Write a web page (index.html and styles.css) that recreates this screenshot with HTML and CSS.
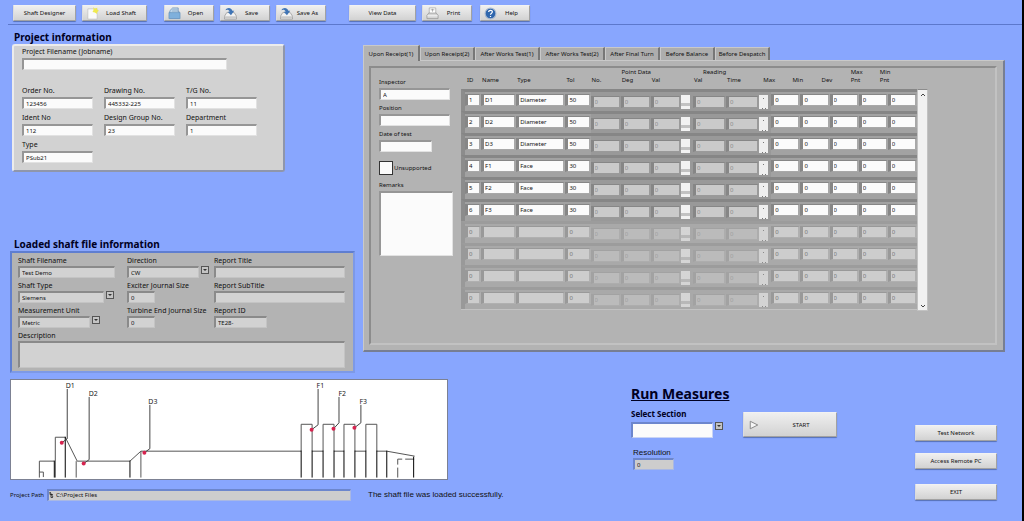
FILE: index.html
```html
<!DOCTYPE html>
<html lang="en">
<head>
  <meta charset="UTF-8" />
  <meta name="viewport" content="width=device-width, initial-scale=1.0" />
  <title>Shaft Measurement</title>
  <link rel="stylesheet" href="styles.css">
</head>
<body>
  <div class="toolbar">
    <button class="btn w-63">Shaft Designer</button>
    <button class="btn w-65 gap-after">
      <svg class="icon" viewBox="0 0 14 14"><path d="M2 2h10v11H2z" fill="#fafafa" stroke="#b5b5b5" stroke-width=".6"/><path d="M8 0l1.400 2L12 .8 12 3l2 1-2 1.500v2L9.500 6 7 5.500 8 3.500z" fill="#f0ea50"/></svg>
      <span>Load Shaft</span>
    </button>
    <button class="btn">
      <svg class="icon" viewBox="0 0 14 14"><path d="M2 12V4l3-3h6v4h1v7z" fill="#c5dcf0" stroke="#5681ad" stroke-width=".7"/><path d="M4.500 3h6M4 4.500h7" stroke="#7a98b5" stroke-width=".6"/><path d="M1 6h12v6.500H1z" fill="#7fb0dc" stroke="#5b8ab8" stroke-width=".6"/></svg>
      <span>Open</span>
    </button>
    <button class="btn">
      <svg class="icon" viewBox="0 0 14 14"><path d="M3 6h8l2.500 4v3H.5v-3z" fill="#f1f1f1" stroke="#8b8b8b" stroke-width=".7"/><path d="M1 10h12v2.500H1z" fill="#c9c9c9"/><path d="M1.500 3.500C3 .5 7.500-.2 9 4h2L7.500 9 4 5h2C5.200 2.800 3.500 2.500 1.500 3.500z" fill="#3f74b5"/></svg>
      <span>Save</span>
    </button>
    <button class="btn gap-after-lg">
      <svg class="icon" viewBox="0 0 14 14"><path d="M3 6h8l2.500 4v3H.5v-3z" fill="#f1f1f1" stroke="#8b8b8b" stroke-width=".7"/><path d="M1 10h12v2.500H1z" fill="#c9c9c9"/><path d="M1.500 3.500C3 .5 7.500-.2 9 4h2L7.500 9 4 5h2C5.200 2.800 3.500 2.500 1.500 3.500z" fill="#3f74b5"/></svg>
      <span>Save As</span>
    </button>
    <button class="btn w-67">View Data</button>
    <button class="btn gap-after-sm">
      <svg class="icon" viewBox="0 0 14 14"><path d="M3.500 7V1h7v6" fill="#fff" stroke="#9a9a9a" stroke-width=".7"/><path d="M5 3h4M7 2v3" stroke="#999" stroke-width=".8"/><path d="M1 9l2-2.500h8L13 9v3.500H1z" fill="#d5d5d5" stroke="#8d8d8d" stroke-width=".7"/><path d="M1.500 9.500h11" stroke="#f7f7f7"/></svg>
      <span>Print</span>
    </button>
    <button class="btn">
      <svg class="icon" viewBox="0 0 14 14"><circle cx="7" cy="7" r="5.800" fill="#2f66ad" stroke="#a9b9cf" stroke-width="1.200"/><path d="M5 5.500C5 3 9.200 3.100 9 5.400 8.900 6.700 7 6.600 7 8.300M7 9.600v1.300" fill="none" stroke="#fff" stroke-width="1.300"/></svg>
      <span>Help</span>
    </button>
  </div>

  <div class="upper">
    <div class="left-col">
      <h2>Project information</h2>
      <div class="panel project-panel">
        <div class="field job-field">
          <label for="jobname">Project Filename (Jobname)</label>
          <input id="jobname" type="text">
        </div>
        <div class="project-grid">
          <div class="field"><label for="orderNo">Order No.</label><input id="orderNo" type="text" value="123456"></div>
          <div class="field"><label for="drawingNo">Drawing No.</label><input id="drawingNo" type="text" value="445332-225"></div>
          <div class="field"><label for="tgNo">T/G No.</label><input id="tgNo" type="text" value="11"></div>
          <div class="field"><label for="identNo">Ident No</label><input id="identNo" type="text" value="112"></div>
          <div class="field"><label for="designNo">Design Group No.</label><input id="designNo" type="text" value="23"></div>
          <div class="field"><label for="department">Department</label><input id="department" type="text" value="1"></div>
          <div class="field"><label for="ptype">Type</label><input id="ptype" type="text" value="PSub21"></div>
        </div>
      </div>

      <h2>Loaded shaft file information</h2>
      <div class="shaft-panel">
        <div class="field"><label for="shaftFile">Shaft Filename</label><input id="shaftFile" type="text" value="Test Demo" readonly></div>
        <div class="field">
          <label for="direction">Direction</label>
          <div class="pick"><select id="direction" class="w-72"><option>CW</option><option>CCW</option></select><span class="arrow"></span></div>
        </div>
        <div class="field"><label for="repTitle">Report Title</label><input id="repTitle" type="text" readonly></div>
        <div class="field">
          <label for="shaftType">Shaft Type</label>
          <div class="pick"><select id="shaftType" class="w-86"><option>Siemens</option></select><span class="arrow"></span></div>
        </div>
        <div class="field"><label for="exciter">Exciter Journal Size</label><input id="exciter" class="w-28" type="text" value="0" readonly></div>
        <div class="field"><label for="repSub">Report SubTitle</label><input id="repSub" type="text" readonly></div>
        <div class="field">
          <label for="unit">Measurement Unit</label>
          <div class="pick"><select id="unit" class="w-72"><option>Metric</option></select><span class="arrow"></span></div>
        </div>
        <div class="field"><label for="turbine">Turbine End Journal Size</label><input id="turbine" class="w-28" type="text" value="0" readonly></div>
        <div class="field"><label for="repId">Report ID</label><input id="repId" class="w-53" type="text" value="TE28-" readonly></div>
        <div class="field wide"><label for="descr">Description</label><textarea id="descr" readonly></textarea></div>
      </div>
    </div>

    <div class="tabs-area">
      <div class="tabs" role="tablist">
        <button class="tab active" role="tab" aria-selected="true">Upon Receipt(1)</button>
        <button class="tab" role="tab">Upon Receipt(2)</button>
        <button class="tab wider" role="tab">After Works Test(1)</button>
        <button class="tab wider" role="tab">After Works Test(2)</button>
        <button class="tab" role="tab">After Final Turn</button>
        <button class="tab" role="tab">Before Balance</button>
        <button class="tab" role="tab">Before Despatch</button>
      </div>
      <div class="tab-panel">
        <div class="tab-body">
          <div class="inspect">
            <div class="field"><label for="inspector">Inspector</label><input id="inspector" type="text" value="A"></div>
            <div class="field"><label for="position">Position</label><input id="position" type="text"></div>
            <div class="field"><label for="testDate">Date of test</label><input id="testDate" class="w-53" type="text"></div>
            <div class="check"><input id="unsupported" type="checkbox"><label for="unsupported">Unsupported</label></div>
            <div class="field"><label for="remarks">Remarks</label><textarea id="remarks"></textarea></div>
          </div>

          <div class="readings">
            <table>
              <colgroup>
                <col class="c-id"><col class="c-name"><col class="c-type"><col class="c-tol">
                <col class="c-pt"><col class="c-pt"><col class="c-pt"><col class="c-slide">
                <col class="c-rd"><col class="c-rd"><col class="c-slide">
                <col class="c-st"><col class="c-st"><col class="c-st"><col class="c-st"><col class="c-st">
              </colgroup>
              <thead>
                <tr>
                  <th rowspan="2" class="first">ID</th>
                  <th rowspan="2">Name</th>
                  <th rowspan="2">Type</th>
                  <th rowspan="2">Tol</th>
                  <th colspan="3" class="mid">Point Data</th>
                  <th rowspan="2"></th>
                  <th colspan="2" class="reading">Reading</th>
                  <th rowspan="2"></th>
                  <th rowspan="2" class="stat"><span>Max</span></th>
                  <th rowspan="2" class="stat"><span>Min</span></th>
                  <th rowspan="2" class="stat"><span>Dev</span></th>
                  <th rowspan="2" class="stat"><span>Max<br>Pnt</span></th>
                  <th rowspan="2" class="stat"><span>Min<br>Pnt</span></th>
                </tr>
                <tr>
                  <th>No.</th><th>Deg</th><th>Val</th><th>Val</th><th>Time</th>
                </tr>
              </thead>
              <tbody id="rows"></tbody>
            </table>
            <div class="scroll">
              <button aria-label="Scroll up"><svg viewBox="0 0 6 4"><path d="M1 3l2-2 2 2" fill="none" stroke="#444"/></svg></button>
              <button aria-label="Scroll down"><svg viewBox="0 0 6 4"><path d="M1 1l2 2 2-2" fill="none" stroke="#444"/></svg></button>
            </div>
          </div>
        </div>
      </div>
    </div>
  </div>

  <div class="lower">
    <div class="drawing-col">
      <svg class="drawing" viewBox="0 0 438 99">
        <g fill="none" stroke="#555" stroke-width="1">
          <path d="M28.500 98V81.500H43.500"/>
          <path d="M28.500 92.500h4v5"/>
          <path d="M44.500 98V57.500H54.500L66.500 81.500H119.500L130.500 71.500H291.500V44.500H302.500V71.500H313.500V44.500H324.500V71.500H334.500V44.500H345.500V71.500H356.500V44.500H367.500V71.500H377.500L405.500 76.500"/>
          <path d="M65.500 81.500V98M130.500 71.500V98"/>
          <path d="M388.500 98V79.500H405" stroke-dasharray="10 3"/>
        </g>
        <path d="M43.500 81V98M54.500 57V98M119.500 81V98M291.500 71V98M302.500 71V98M313.500 71V98M324.500 71V98M334.500 71V98M345.500 71V98M356.500 71V98M367.500 71V98M377.500 71V98M404.500 77V98" stroke="#000" fill="none"/>
        <g fill="none" stroke="#444" stroke-width="1">
          <path d="M56.500 9V59L51 63"/>
          <path d="M78.500 17V80L73 84"/>
          <path d="M139.500 25V69L134 73"/>
          <path d="M308.500 9V45L302 50"/>
          <path d="M329.500 17V43L324 49"/>
          <path d="M351.500 25V43L345 48"/>
        </g>
        <g fill="#d6244f">
          <circle cx="51" cy="63" r="2"/><circle cx="73" cy="84" r="2"/><circle cx="134" cy="73" r="2"/>
          <circle cx="302" cy="50" r="2"/><circle cx="324" cy="49" r="2"/><circle cx="345" cy="48" r="2"/>
        </g>
        <g class="marks">
          <text x="55" y="8">D1</text><text x="78" y="16">D2</text><text x="138" y="24">D3</text>
          <text x="307" y="8">F1</text><text x="329" y="16">F2</text><text x="350" y="24">F3</text>
        </g>
      </svg>
      <div class="path-row">
        <label for="path">Project Path</label>
        <div class="path-box">
          <svg viewBox="0 0 5 8"><path d="M1 1v2.500h3M2 3.500v3h2M1 1l3 5" fill="none" stroke="#222" stroke-width=".8"/></svg>
          <input id="path" type="text" value="C:\Project Files" readonly>
        </div>
        <span class="status">The shaft file was loaded successfully.</span>
      </div>
    </div>

    <div class="run">
      <h1>Run Measures</h1>
      <div class="run-row">
        <div>
          <label class="section-label" for="section">Select Section</label>
          <div class="pick"><select id="section"><option></option></select><span class="arrow"></span></div>
          <div class="resolution">
            <label for="resolution">Resolution</label>
            <input id="resolution" type="text" value="0" readonly>
          </div>
        </div>
        <button class="btn start">
          <svg viewBox="0 0 8 8"><path d="M1 1l6 3-6 3z" fill="#f5f5f5" stroke="#8a8a8a" stroke-width=".8"/></svg>
          <span>START</span>
        </button>
      </div>
    </div>

    <div class="side-buttons">
      <button class="btn">Test Network</button>
      <button class="btn">Access Remote PC</button>
      <button class="btn exit">EXIT</button>
    </div>
  </div>

  <script src="script.js"></script>
</body>
</html>
```
FILE: styles.css
```css
* {
  box-sizing: border-box;
}

body {
  margin: 0;
  min-height: 100vh;
  background: #88a6fe;
  border-right: 2px solid #000;
  font-family: "Noto Sans", "Open Sans", sans-serif;
  font-size: 7px;
  line-height: 10px;
  color: #111;
}

h1, h2 {
  margin: 0;
  color: #000022;
}

h2 {
  font-size: 10px;
  line-height: 14px;
  padding-left: 4px;
}

button, input, select, textarea {
  font-family: inherit;
  font-size: 6px;
  line-height: 8px;
  color: #111;
  margin: 0;
}

label {
  display: block;
  white-space: nowrap;
}

/* raised buttons */
.btn {
  display: flex;
  align-items: center;
  justify-content: center;
  width: 50px;
  height: 16px;
  padding: 0 3px;
  border: 1px solid #a2a2a2;
  border-top-color: #f2f2f2;
  border-left-color: #dcdcdc;
  border-radius: 1px;
  background: linear-gradient(#efefef, #d2d2d2);
  box-shadow: 0 1px 1px #5670b5;
  white-space: nowrap;
}

.btn span {
  flex: 1;
  text-align: center;
}

.icon {
  width: 13px;
  height: 13px;
}

.w-63 { width: 63px; }
.w-65 { width: 65px; }
.w-67 { width: 67px; }

.toolbar {
  display: flex;
  gap: 6px;
  height: 25px;
  margin-left: 8px;
  padding: 5px 0 0 5px;
  border-bottom: 1px solid #5c78cc;
}

.gap-after { margin-right: 11px; }
.gap-after-lg { margin-right: 17px; }
.gap-after-sm { margin-right: 2px; }

/* sunken boxes */
input, select, textarea {
  display: block;
  width: 100%;
  height: 12px;
  padding: 0 2px;
  border: 2px solid;
  border-color: #969696 #e2e2e2 #e2e2e2 #969696;
  border-width: 2px 1px 1px 2px;
  border-radius: 0;
  background: #fbfbfb;
  appearance: none;
  outline: none;
}

textarea {
  resize: none;
}

.field label {
  margin-bottom: 1px;
}

.pick {
  display: flex;
  gap: 2px;
}

.arrow {
  display: flex;
  flex: none;
  align-items: center;
  justify-content: center;
  width: 8px;
  height: 8px;
  border: 1px solid #555;
  background: #c4c4c4;
}

.arrow::after {
  content: "";
  border: 2px solid transparent;
  border-top-color: #333;
  border-bottom: 0;
}

.upper {
  display: flex;
  align-items: flex-start;
  padding: 5px 17px 0 10px;
}

.left-col {
  width: 345px;
  flex: none;
}

.project-panel {
  width: 273px;
  height: 128px;
  margin: 0 0 65px 2px;
  padding: 1px 8px 0;
  background: #d2d2d2;
  border: 2px solid;
  border-color: #ececec #8f96ab #8f96ab #ececec;
  border-radius: 3px;
}

.job-field {
  width: 205px;
  margin-bottom: 16px;
}

.project-grid {
  display: grid;
  grid-template-columns: repeat(3, 71px);
  gap: 4px 11px;
}

.shaft-panel {
  display: grid;
  grid-template-columns: 97px 75px 131px;
  gap: 3px 12px;
  padding: 3px 6px 3px 6px;
  background: #b3b3b3;
  border: 2px solid;
  border-color: #5f7ed0 #7d99e6 #7d99e6 #5f7ed0;
}

.shaft-panel label {
  margin: 0;
}

.shaft-panel input, .shaft-panel select, .shaft-panel textarea {
  background: #d2d2d2;
  border-color: #8a8a8a #c4c4c4 #c4c4c4 #8a8a8a;
}

.shaft-panel select { flex: none; }

.wide {
  grid-column: 1 / -1;
}

.wide textarea {
  height: 27px;
}

.w-28 { width: 28px; }
.w-53 { width: 53px; }
.w-72 { width: 72px; }
.w-86 { width: 86px; }

/* tab control */
.tabs-area {
  flex: 1;
  margin: 15px 0 0 8px;
}

.tabs {
  display: flex;
  align-items: flex-end;
}

.tab {
  height: 13px;
  width: 55px;
  padding: 0;
  border: 1px solid #c9c9c9;
  border-right: 2px solid #777;
  border-bottom: 0;
  background: #adadad;
  white-space: nowrap;
}

.tab.wider { width: 65px; }

.tab.active {
  width: 57px;
  height: 16px;
  margin-bottom: -1px;
  background: #b3b3b3;
  z-index: 1;
}

.tab-panel {
  padding: 5px 6px 5px 5px;
  background: #b3b3b3;
  border: 1px solid #c9c9c9;
  border-right: 2px solid #777e92;
  border-bottom: 2px solid #777e92;
}

.tab-body {
  display: flex;
  align-items: flex-start;
  min-height: 279px;
  border: 2px solid;
  border-color: #8c8c8c #c2c2c2 #c2c2c2 #8c8c8c;
}

.inspect {
  width: 90px;
  padding: 10px 8px 0;
  font-size: 6px;
}

.inspect .field {
  width: 71px;
  margin-bottom: 4px;
}

.inspect .field label,
.check label {
  line-height: 9px;
}

.check {
  display: flex;
  align-items: center;
  gap: 1px;
  margin: 9px 0 6px;
}

.check input {
  width: 14px;
  height: 14px;
  padding: 0;
  border: 1px solid #333;
}

.inspect textarea {
  width: 74px;
  height: 65px;
}

/* readings table */
.readings {
  display: flex;
  align-items: flex-start;
}

table {
  table-layout: fixed;
  width: 456px;
  border-collapse: separate;
  border-spacing: 0;
  border-bottom: 1px solid #c2c2c2;
}

.c-id { width: 20px; }
.c-name { width: 35px; }
.c-type { width: 49px; }
.c-tol { width: 25px; }
.c-pt { width: 30px; }
.c-slide { width: 12px; }
.c-rd { width: 33px; }
.c-st { width: 29px; }

th {
  padding: 0 0 0 1px;
  height: 8px;
  font-size: 6px;
  line-height: 8px;
  font-weight: normal;
  text-align: left;
  vertical-align: bottom;
  white-space: nowrap;
}

th.first { padding-left: 6px; }
th.mid { text-align: center; }
th.reading { padding-left: 10px; }

.stat span {
  display: inline-block;
  margin-left: -9px;
}

thead::after {
  content: "";
  display: table-row;
  height: 5px;
}

td {
  height: 22px;
  padding: 0 0 4px;
  vertical-align: middle;
  background: #a2a2a2;
  border-top: 3px solid #868686;
}

td:first-child {
  border-left: 4px solid #8c8c8c;
}

td input {
  height: 12px;
  padding: 0 1px;
  border-color: #868686 #a8a8a8 #a8a8a8 #868686;
  border-width: 1px 2px 1px 3px;
}

td.grey {
  padding: 1px 0 0;
  background: #999;
}

td.grey input {
  background: #cacaca;
  color: #8c8c8c;
  border-color: #868686 #9a9a9a #9a9a9a #868686;
}

.knob {
  width: 9px;
  height: 14px;
  background: linear-gradient(#f2f2f2 55%, #c2c2c2 55%, #c2c2c2 80%, #f2f2f2 80%);
}

/* one dot on top, two at the bottom */
.knob.dots {
  background:
    linear-gradient(#777, #777) 4px 3px / 1px 1px no-repeat,
    linear-gradient(#777, #777) 3px 13px / 1px 1px no-repeat,
    linear-gradient(#777, #777) 6px 13px / 1px 1px no-repeat,
    #efefef;
}

tr.off td {
  background: #a9a9a9;
  border-top-color: #9c9c9c;
}

tr.off td:first-child { border-left-color: #999; }

tr.off input {
  background: #cdcdcd;
  color: #777;
  border-color: #999 #b0b0b0 #b0b0b0 #999;
}

tr.off td.grey input {
  background: #bbb;
  color: #a0a0a0;
  border-color: #a2a2a2 #adadad #adadad #a2a2a2;
}

tr.off .knob { opacity: .6; }

.scroll {
  display: flex;
  flex-direction: column;
  justify-content: space-between;
  width: 11px;
  height: 222px;
  margin-top: 21px;
  background: #f1f1f1;
  border: 1px solid #c2c2c2;
  border-top-color: #8c8c8c;
}

.scroll button {
  height: 9px;
  padding: 0;
  border: 0;
  background: none;
}

.scroll svg {
  display: block;
  width: 6px;
  height: 4px;
  margin: 0 auto;
}

/* bottom part */
.lower {
  display: flex;
  align-items: flex-start;
  padding: 6px 25px 0 10px;
}

.drawing-col {
  width: 621px;
  flex: none;
}

.drawing {
  display: block;
  width: 438px;
  background: #fff;
  border: 1px solid #7c8193;
}

.marks {
  font-size: 7px;
  fill: #222;
}

.path-row {
  display: flex;
  align-items: center;
  margin-top: 9px;
  font-size: 6px;
}

.path-box {
  display: flex;
  align-items: center;
  width: 304px;
  height: 12px;
  margin: 0 17px 0 3px;
  background: #cdcdcd;
  border: 2px solid;
  border-width: 2px 1px 1px 2px;
  border-color: #6c86cd #a9b8e4 #a9b8e4 #6c86cd;
}

.path-box svg {
  width: 5px;
  height: 8px;
}

.path-box input {
  height: 9px;
  border: 0;
  background: none;
}

.status {
  font-family: "Liberation Sans", Arial, sans-serif;
  font-size: 8px;
}

.run {
  flex: 1;
  padding-top: 5px;
}

h1 {
  font-size: 14px;
  line-height: 20px;
  text-decoration: underline;
}

.run-row {
  display: flex;
  gap: 20px;
}

.section-label {
  margin: 5px 0 3px;
  font-size: 8px;
  font-weight: bold;
  color: #000022;
}

.run select {
  width: 82px;
  height: 16px;
  border-color: #6c86cd #c9d4f5 #c9d4f5 #6c86cd;
}

.resolution {
  width: 41px;
  margin: 10px 0 0 2px;
}

.resolution label {
  font-family: "Liberation Sans", Arial, sans-serif;
  font-size: 8px;
}

.resolution input {
  background: #cdcdcd;
  border-color: #6c86cd #a9b8e4 #a9b8e4 #6c86cd;
}

.start {
  width: 94px;
  height: 25px;
  margin-top: 8px;
}

.start svg {
  width: 10px;
  height: 10px;
  margin-left: 2px;
}

.start span {
  padding-left: 10px;
}

.side-buttons {
  display: flex;
  flex-direction: column;
  gap: 12px;
  padding-top: 46px;
}

.side-buttons .btn {
  width: 82px;
}

.exit { margin-top: 3px; }
```
FILE: script.js
```javascript
const points = [
  ['1', 'D1', 'Diameter', '50'],
  ['2', 'D2', 'Diameter', '50'],
  ['3', 'D3', 'Diameter', '50'],
  ['4', 'F1', 'Face', '30'],
  ['5', 'F2', 'Face', '30'],
  ['6', 'F3', 'Face', '30'],
];
const totalRows = 10;
const names = ['ID', 'Name', 'Type', 'Tol'];
const stats = ['Max', 'Min', 'Dev', 'Max Pnt', 'Min Pnt'];

function cell(label, value, cls, attr) {
  return `<td class="${cls}"><input type="text" aria-label="${label}" value="${value}" ${attr}></td>`;
}

function buildRow(i) {
  const off = i >= points.length;
  const data = off ? ['0', '', '', '0'] : points[i];
  const attr = off ? 'disabled' : '';
  let html = '';
  names.forEach((n, k) => html += cell(n, data[k], '', attr));
  ['Point No.', 'Deg', 'Point Val'].forEach(n => html += cell(n, '0', 'grey', 'disabled'));
  html += '<td class="grey"><div class="knob"></div></td>';
  ['Reading Val', 'Time'].forEach(n => html += cell(n, '0', 'grey', 'disabled'));
  html += '<td class="grey"><div class="knob dots"></div></td>';
  stats.forEach(n => html += cell(n, '0', '', attr));
  return `<tr class="${off ? 'off' : ''}">${html}</tr>`;
}

let out = '';
for (let i = 0; i < totalRows; i++) out += buildRow(i);
document.getElementById('rows').innerHTML = out;

const tabs = document.querySelectorAll('.tab');
tabs.forEach(tab => tab.addEventListener('click', () => {
  tabs.forEach(t => t.classList.remove('active'));
  tab.classList.add('active');
}));
```
